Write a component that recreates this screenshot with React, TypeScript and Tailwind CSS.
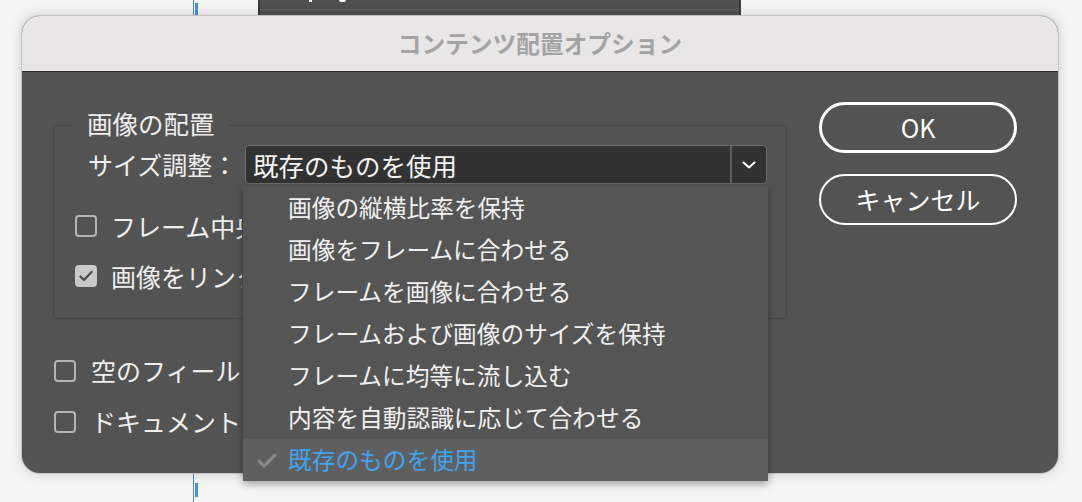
import React from "react";

const fitOptions = [
    "画像の縦横比率を保持",
    "画像をフレームに合わせる",
    "フレームを画像に合わせる",
    "フレームおよび画像のサイズを保持",
    "フレームに均等に流し込む",
    "内容を自動認識に応じて合わせる",
    "既存のものを使用",
];

function Checkbox({ checked = false }: { checked?: boolean }) {
    if (checked) {
        return (
            <div className="flex h-[22px] w-[22px] shrink-0 items-center justify-center rounded-[4px] bg-[#c9c9c9]">
                <svg width="14" height="12" viewBox="0 0 14 12" fill="none">
                    <path d="M1.5 6.5l3.5 3.5 7.5-8" stroke="#4f4f4f" strokeWidth="2.4" strokeLinecap="round" strokeLinejoin="round" />
                </svg>
            </div>
        );
    }
    return <div className="h-[22px] w-[22px] shrink-0 rounded-[4px] border-2 border-[#b5b5b5]" />;
}

// rows are cut off where the open menu starts (x = 243)
function CheckRow({ label, checked, className }: { label: string; checked?: boolean; className?: string }) {
    return (
        <div className={`flex h-[50px] items-center gap-[14px] overflow-hidden ${className ?? ""}`}>
            <Checkbox checked={checked} />
            <span className="whitespace-nowrap text-[25px] leading-none text-[#eeeeee]">{label}</span>
        </div>
    );
}

export default function App() {
    const selected = "既存のものを使用";

    return (
        <div className="relative h-[502px] w-[1082px] overflow-hidden bg-[#f5f5f5] font-['Noto_Sans_CJK_JP','Liberation_Sans',sans-serif]">
            {/* background bits behind the dialog */}
            <div className="absolute left-[193px] top-0 h-full w-px bg-[#4a8fe6]" />
            <div className="absolute left-[195px] top-[3px] h-[12px] w-[3px] bg-[#4a8fe6]" />
            <div className="absolute left-[195px] top-[483px] h-[14px] w-[3px] bg-[#4a8fe6]" />
            <div className="absolute left-[258px] top-0 h-[16px] w-[483px] border-x-2 border-[#3b3b3b] bg-[#4f4f4f]">
                <div className="absolute left-[49px] top-0 h-[2px] w-[3px] bg-white" />
                <div className="absolute left-[79px] top-0 h-[2px] w-[7px] rounded-b bg-white" />
                <div className="mt-[9px] h-px w-full bg-[#5e5e5e]" />
            </div>

            {/* Dialog */}
            <div className="absolute left-[22px] top-[16px] h-[457px] w-[1036px] rounded-[18px] bg-[#535353] shadow-[0_0_14px_rgba(0,0,0,0.18)] ring-1 ring-[#c2c2c2]">
                {/* Title bar */}
                <div className="flex h-[56px] items-center justify-center rounded-t-[18px] border-b border-[#2f2f2f] bg-[#e8e6e7]">
                    <span className="text-[23.7px] font-bold leading-none text-[#a3a3a3]">コンテンツ配置オプション</span>
                </div>

                <div className="flex">
                    {/* Left column */}
                    <div className="pl-[31px] pt-[53px]">
                        <div className="relative h-[194px] w-[734px] rounded-[5px] border border-[#474747] pt-[19px]">
                            <span className="absolute left-[19px] top-[-17px] bg-[#535353] px-[14px] text-[25.5px] leading-[28px] text-[#eeeeee]">
                                画像の配置
                            </span>

                            <div className="flex items-center">
                                <span className="w-[191px] pl-[34px] text-[25px] leading-none text-[#eeeeee]">サイズ調整：</span>
                                <div className="relative flex h-[39px] w-[522px] items-center rounded-[4px] border border-[#6b6b6b] bg-[#323232]">
                                    <span className="flex-1 pl-[7px] text-[25.5px] leading-none text-[#f2f2f2]">{selected}</span>
                                    <div className="flex h-full w-[36px] items-center justify-center border-l-2 border-[#5c5c5c]">
                                        <svg width="14" height="8" viewBox="0 0 14 8" fill="none">
                                            <path d="M1.5 1.5l5.5 5 5.5-5" stroke="#ffffff" strokeWidth="2" strokeLinecap="round" strokeLinejoin="round" />
                                        </svg>
                                    </div>

                                    {/* Open dropdown menu */}
                                    <div className="absolute left-[-3px] top-[40px] z-10 w-[525px] bg-[#555555] pt-[1px] shadow-[0_3px_8px_rgba(0,0,0,0.35)]">
                                        {fitOptions.map((opt) => {
                                            const isSel = opt === selected;
                                            return (
                                                <div
                                                    key={opt}
                                                    className={`flex h-[42px] items-center ${isSel ? "bg-[#5f5f5f]" : ""}`}
                                                >
                                                    <div className="flex w-[45px] items-center justify-center pl-[2px]">
                                                        {isSel && (
                                                            <svg width="20" height="15" viewBox="0 0 20 15" fill="none">
                                                                <path d="M2 8l5 5 11-11" stroke="#8c8c8c" strokeWidth="3" strokeLinecap="round" strokeLinejoin="round" />
                                                            </svg>
                                                        )}
                                                    </div>
                                                    <span
                                                        className={`text-[23.7px] leading-none ${isSel ? "text-[#40a4ef]" : "text-[#f0f0f0]"}`}
                                                    >
                                                        {opt}
                                                    </span>
                                                </div>
                                            );
                                        })}
                                    </div>
                                </div>
                            </div>

                            <CheckRow label="フレーム中央に配置" className="mt-[17px] w-[188px] pl-[21px]" />
                            <CheckRow label="画像をリンク" checked className="w-[188px] pl-[21px]" />
                        </div>

                        <div className="mt-[26px] pl-[1px]">
                            <CheckRow label="空のフィールドの空白行を削除" className="h-[51px] w-[190px] gap-[15px]" />
                            <CheckRow label="ドキュメントごとのレコード数の上限" className="h-[51px] w-[190px] gap-[15px]" />
                        </div>
                    </div>

                    {/* Buttons */}
                    <div className="ml-[32px] flex flex-col gap-[21px] pt-[30px]">
                        <button className="flex h-[51px] w-[198px] items-center justify-center rounded-full border-[3px] border-white text-[25px] leading-none text-white">
                            OK
                        </button>
                        <button className="flex h-[51px] w-[198px] items-center justify-center rounded-full border-2 border-white text-[25px] leading-none text-white">
                            キャンセル
                        </button>
                    </div>
                </div>
            </div>
        </div>
    );
}
